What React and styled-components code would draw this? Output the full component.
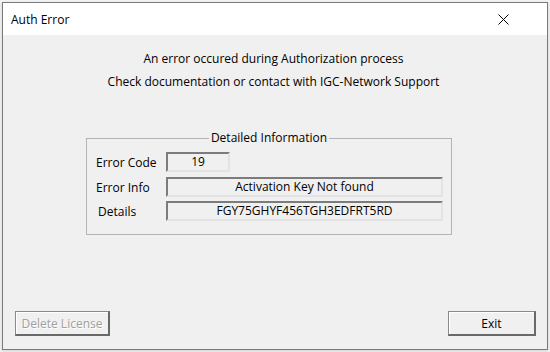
import React from 'react';
import styled, { createGlobalStyle } from 'styled-components';

const GlobalStyle = createGlobalStyle`
  html, body {
    margin: 0;
    padding: 0;
    background: #f3f3f3;
  }
  body {
    padding: 2px;
    font-family: "Open Sans", "Liberation Sans", Arial, sans-serif;
    font-size: 12px;
    color: #000;
  }
`;

const Window = styled.div`
  width: 546px;
  height: 348px;
  box-sizing: border-box;
  border: 1px solid #7a7a7a;
  display: flex;
  flex-direction: column;
  background: #f0f0f0;
  box-shadow: 0 1px 3px rgba(0, 0, 0, 0.15);
`;

const TitleBar = styled.div`
  height: 32px;
  background: #fff;
  display: flex;
  align-items: center;
  justify-content: space-between;
  padding: 0 38px 0 8px;
  font-size: 12px;
`;

const Content = styled.div`
  flex: 1;
  display: flex;
  flex-direction: column;
  padding: 12px 11px 13px 12px;
`;

const Message = styled.div`
  text-align: center;
  line-height: 23px;
  padding-right: 4px;
`;

const GroupBox = styled.div`
  position: relative;
  box-sizing: border-box;
  width: 366px;
  height: 97px;
  margin: 45px 0 0 71px;
  border: 1px solid #b4b4b4;
  padding: 13px 8px 0 9px;
`;

const Legend = styled.span`
  position: absolute;
  top: -9px;
  left: 50%;
  transform: translateX(-50%);
  background: #f0f0f0;
  padding: 0 2px;
  line-height: 16px;
  white-space: nowrap;
`;

const Rows = styled.div`
  display: grid;
  grid-template-columns: 70px 1fr;
  grid-auto-rows: 20px;
  row-gap: 4.5px;
  align-items: center;
`;

const Label = styled.div`
  padding-left: ${p => p.$indent || 0}px;
  line-height: 16px;
  padding-top: 2px;
`;

const Field = styled.div`
  box-sizing: border-box;
  height: 20px;
  width: ${p => (p.$width ? `${p.$width}px` : '100%')};
  border-top: 2px solid #7c7c7c;
  border-left: 2px solid #7c7c7c;
  border-bottom: 2px solid #e3e3e3;
  border-right: 2px solid #e3e3e3;
  display: flex;
  align-items: center;
  justify-content: center;
  line-height: 16px;
`;

const ButtonRow = styled.div`
  margin-top: auto;
  display: flex;
  justify-content: space-between;
`;

const Button = styled.button`
  box-sizing: border-box;
  width: ${p => p.$width}px;
  height: 25px;
  background: #f0f0f0;
  border: 1px solid #8a8a8a;
  border-right: 2px solid #696969;
  border-bottom: 2px solid #696969;
  box-shadow: inset 1px 1px #fff;
  font-family: "Open Sans", "Liberation Sans", Arial, sans-serif;
  font-size: 12px;
  padding: 0;
  color: ${p => (p.disabled ? '#a0a0a0' : '#000')};
  text-shadow: ${p => (p.disabled ? '1px 1px #fff' : 'none')};
`;

const CloseIcon = () => (
  <svg width="11" height="11" viewBox="0 0 11 11">
    <path d="M0.5 0.5 L10.5 10.5 M10.5 0.5 L0.5 10.5" stroke="#000" strokeWidth="1" fill="none" />
  </svg>
);

export default function App() {
  return (
    <>
      <GlobalStyle />
      <Window>
        <TitleBar>
          <span>Auth Error</span>
          <CloseIcon />
        </TitleBar>
        <Content>
          <Message>
            <div>An error occured during Authorization process</div>
            <div>Check documentation or contact with IGC-Network Support</div>
          </Message>
          <GroupBox>
            <Legend>Detailed Information</Legend>
            <Rows>
              <Label>Error Code</Label>
              <Field $width={64}>19</Field>
              <Label>Error Info</Label>
              <Field>Activation Key Not found</Field>
              <Label $indent={2}>Details</Label>
              <Field>FGY75GHYF456TGH3EDFRT5RD</Field>
            </Rows>
          </GroupBox>
          <ButtonRow>
            <Button $width={95} disabled>Delete License</Button>
            <Button $width={88}>Exit</Button>
          </ButtonRow>
        </Content>
      </Window>
    </>
  );
}
